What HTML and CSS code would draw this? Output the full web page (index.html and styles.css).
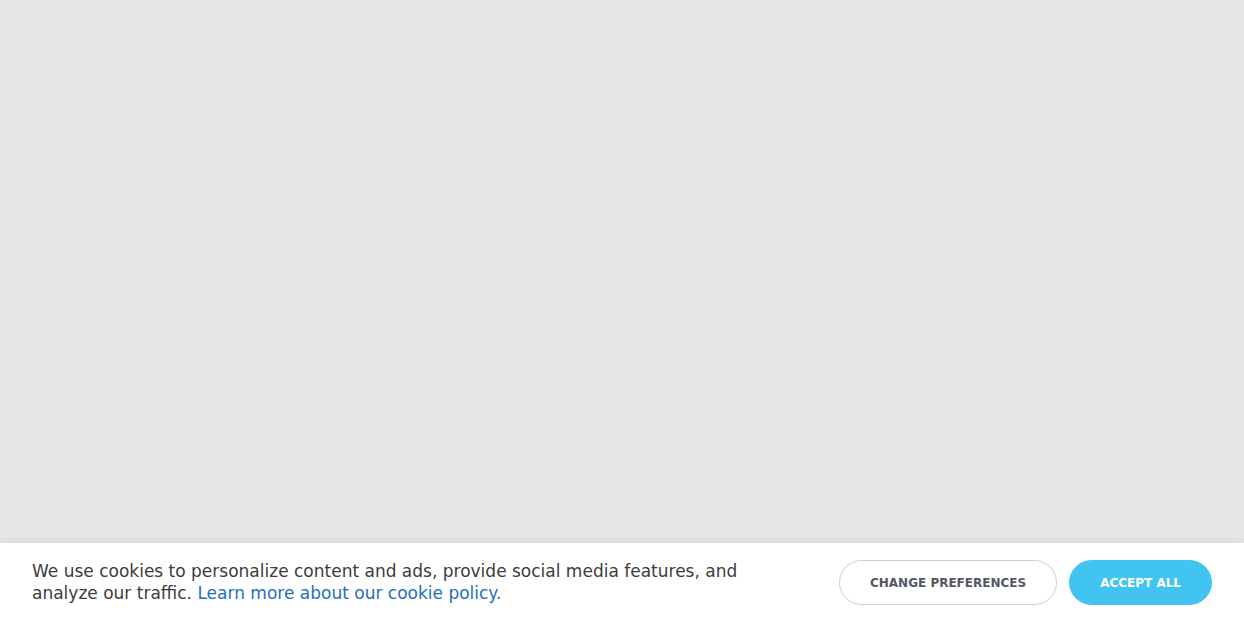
FILE: index.html
```html
<!DOCTYPE html>
<html>
<head>
  <title>Cookie consent</title>
  <link rel="stylesheet" href="styles.css">
</head>
<body>

<div id="page"></div>

<div id="banner">
  <p class="message">We use cookies to personalize content and ads, provide social media features, and analyze our traffic. <a href="#">Learn more about our cookie policy.</a></p>
  <div class="actions">
    <button class="btn btn-outline">Change preferences</button>
    <button class="btn btn-primary">Accept all</button>
  </div>
</div>

</body>
</html>
```

FILE: styles.css
```css
html, body {
  height: 100%;
}
body {
  margin: 0;
  background-color: #e6e6e6;
  font-family: "DejaVu Sans", Verdana, sans-serif;
  display: flex;
  flex-direction: column;
}
#page {
  flex: 1;
  border-top: 1px solid #e1e1e1;
}
#banner {
  display: flex;
  align-items: center;
  justify-content: space-between;
  height: 79px;
  padding: 0 32px;
  background-color: #fff;
  box-shadow: 0 -2px 8px rgba(0,0,0,0.06);
}
.message {
  margin: 0 0 2px 0;
  max-width: 720px;
  font-size: 17px;
  line-height: 22px;
  color: #3c3c3c;
}
.message a {
  color: #1f6fbd;
  text-decoration: none;
}
.actions {
  display: flex;
  gap: 12px;
}
.btn {
  height: 45px;
  padding: 0 30px;
  border-radius: 23px;
  font-family: "DejaVu Sans", Verdana, sans-serif;
  font-size: 12px;
  font-weight: bold;
  letter-spacing: 0;
  text-transform: uppercase;
  cursor: pointer;
}
.btn-outline {
  background: #fff;
  color: #525864;
  border: 1px solid #cfcfcf;
}
.btn-primary {
  background: #42c4f1;
  color: #fff;
  border: 1px solid #42c4f1;
}
```
